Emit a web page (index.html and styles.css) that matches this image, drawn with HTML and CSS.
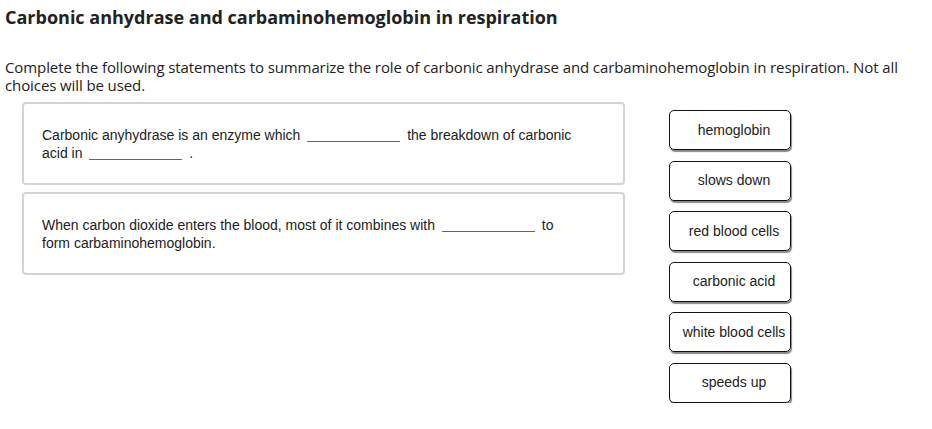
FILE: index.html
```
<!DOCTYPE html>
<html>
<head>
<meta charset="utf-8">
<link rel="stylesheet" href="styles.css">
</head>
<body>
<h1 class="title">Carbonic anhydrase and carbaminohemoglobin in respiration</h1>
<p class="intro">Complete the following statements to summarize the role of carbonic anhydrase and carbaminohemoglobin in respiration. Not all choices will be used.</p>
<div class="work">
  <div class="statements">
    <div class="stmt">Carbonic anyhydrase is an enzyme which <span class="blank"></span> the breakdown of carbonic acid in <span class="blank"></span> .</div>
    <div class="stmt">When carbon dioxide enters the blood, most of it combines with <span class="blank"></span> to form carbaminohemoglobin.</div>
  </div>
  <div class="choices">
    <div class="choice">hemoglobin</div>
    <div class="choice">slows down</div>
    <div class="choice">red blood cells</div>
    <div class="choice">carbonic acid</div>
    <div class="choice">white blood cells</div>
    <div class="choice">speeds up</div>
  </div>
</div>
</body>
</html>
```
FILE: styles.css
```
html, body { background: #fff; }
body {
  margin: 0;
  padding: 0 5px;
  font-family: "Open Sans", "Lato", sans-serif;
  color: #222;
}
.title {
  font-size: 18px;
  font-weight: 700;
  margin: 6px 0 0 0;
  line-height: 22px;
}
.intro {
  font-size: 15px;
  line-height: 18px;
  margin: 30px 0 0 0;
  max-width: 905px;
  letter-spacing: -0.1px;
}
.work {
  display: flex;
  align-items: flex-start;
  margin-top: 8px;
}
.statements {
  margin-left: 17px;
  width: 603px;
  display: flex;
  flex-direction: column;
  gap: 7px;
}
.stmt {
  border: 2px solid #d4d4d4;
  border-radius: 4px;
  box-sizing: border-box;
  height: 83px;
  padding: 22px 41px 0 18px;
  font-family: "Liberation Sans", Arial, sans-serif;
  font-size: 14px;
  line-height: 18px;
  color: #222;
}
.blank {
  display: inline-block;
  width: 93px;
  margin: 0 3px;
  border-bottom: 1px solid #666;
  vertical-align: -2px;
}
.choices {
  margin-left: 44px;
  margin-top: 8px;
  display: flex;
  flex-direction: column;
  gap: 10.6px;
}
.choice {
  width: 122px;
  height: 40px;
  box-sizing: border-box;
  border: 1px solid #111;
  border-radius: 5px;
  box-shadow: 1px 2px 1px #888;
  display: flex;
  align-items: center;
  justify-content: center;
  font-family: "Liberation Sans", Arial, sans-serif;
  font-size: 14px;
  color: #222;
  padding: 0 0 1px 8px;
}
```
